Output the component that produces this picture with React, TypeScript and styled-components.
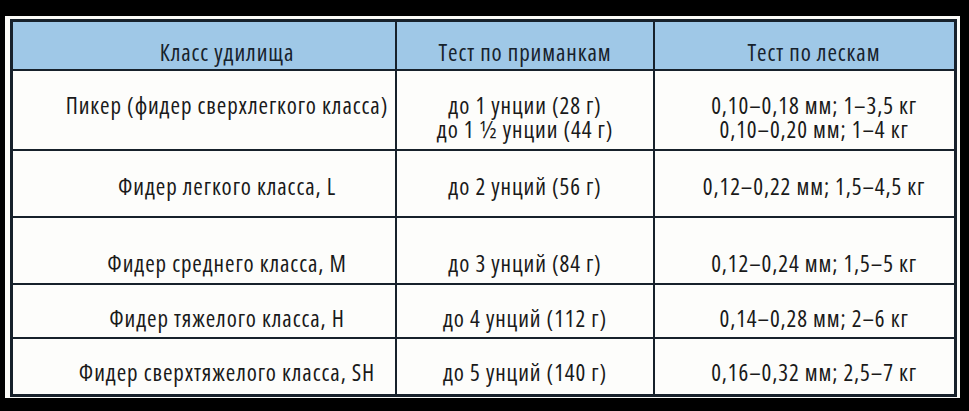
import React from 'react';
import styled, { createGlobalStyle } from 'styled-components';

const GlobalStyle = createGlobalStyle`
  html, body {
    margin: 0;
    padding: 0;
    background: #000;
  }
  body {
    font-family: 'Open Sans', 'Noto Sans', 'DejaVu Sans', sans-serif;
    font-stretch: condensed;
  }
`;

interface IRow {
  rodClass: string;
  lures: string[];
  lines: string[];
  height: number;
  offset: number;
}

const rows: IRow[] = [
  {
    rodClass: 'Пикер (фидер сверхлегкого класса)',
    lures: ['до 1 унции (28 г)', 'до 1 ½ унции (44 г)'],
    lines: ['0,10–0,18 мм; 1–3,5 кг', '0,10–0,20 мм; 1–4 кг'],
    height: 78,
    offset: 22,
  },
  {
    rodClass: 'Фидер легкого класса, L',
    lures: ['до 2 унций (56 г)'],
    lines: ['0,12–0,22 мм; 1,5–4,5 кг'],
    height: 65,
    offset: 23,
  },
  {
    rodClass: 'Фидер среднего класса, M',
    lures: ['до 3 унций (84 г)'],
    lines: ['0,12–0,24 мм; 1,5–5 кг'],
    height: 65,
    offset: 33,
  },
  {
    rodClass: 'Фидер тяжелого класса, H',
    lures: ['до 4 унций (112 г)'],
    lines: ['0,14–0,28 мм; 2–6 кг'],
    height: 52,
    offset: 21,
  },
  {
    rodClass: 'Фидер сверхтяжелого класса, SH',
    lures: ['до 5 унций (140 г)'],
    lines: ['0,16–0,32 мм; 2,5–7 кг'],
    height: 55,
    offset: 21,
  },
];

export default function App() {
  return (
    <>
      <GlobalStyle />
      <Page>
        <Sheet>
          <Table $rows={[47, ...rows.map((r) => r.height)]}>
            <HeadCell $col={0}>
              <Line>Класс удилища</Line>
            </HeadCell>
            <HeadCell $col={1}>
              <Line>Тест по приманкам</Line>
            </HeadCell>
            <HeadCell $col={2}>
              <Line>Тест по лескам</Line>
            </HeadCell>
            {rows.map((row) => (
              <React.Fragment key={row.rodClass}>
                <Cell $col={0} $offset={row.offset}>
                  <Line>{row.rodClass}</Line>
                </Cell>
                <Cell $col={1} $offset={row.offset}>
                  {row.lures.map((t) => (
                    <Line key={t}>{t}</Line>
                  ))}
                </Cell>
                <Cell $col={2} $offset={row.offset}>
                  {row.lines.map((t) => (
                    <Line key={t}>{t}</Line>
                  ))}
                </Cell>
              </React.Fragment>
            ))}
          </Table>
        </Sheet>
      </Page>
    </>
  );
}

const colPadding = [46, 0, 19];

const Page = styled.div`
  width: 969px;
  height: 411px;
  padding: 16px 0 0 5px;
  box-sizing: border-box;
  background: #000;
`;

const Sheet = styled.div`
  width: 955px;
  height: 382px;
  box-sizing: border-box;
  padding: 3px 3px 1px 5px;
  background: #fbfbf8;
`;

const Table = styled.div<{ $rows: number[] }>`
  display: grid;
  grid-template-columns: 382px 256px 299px;
  grid-template-rows: ${({ $rows }) => $rows.map((h) => `${h}px`).join(' ')};
  gap: 2px;
  padding: 3px;
  width: 947px;
  box-sizing: border-box;
  background: #17212b;
`;

const HeadCell = styled.div<{ $col: number }>`
  background: #9fc8e7;
  color: #17222c;
  padding-top: 18px;
  padding-left: ${({ $col }) => colPadding[$col]}px;
  text-align: center;
`;

const Cell = styled.div<{ $col: number; $offset: number }>`
  background: #fdfdfb;
  color: #1a1a1a;
  padding-top: ${({ $offset }) => $offset}px;
  padding-left: ${({ $col }) => colPadding[$col]}px;
  text-align: center;
`;

const Line = styled.div`
  font-size: 23px;
  font-weight: 400;
  letter-spacing: 0.9px;
  line-height: 24px;
  white-space: nowrap;
`;
